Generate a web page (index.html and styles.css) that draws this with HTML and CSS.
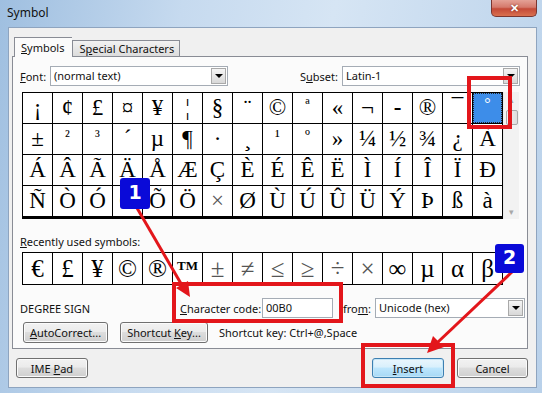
FILE: index.html
```html
<!DOCTYPE html>
<html lang="en">
<head>
    <meta charset="UTF-8">
    <title>Symbol</title>
    <link rel="stylesheet" href="styles.css">
</head>
<body>
    <div class="window">
        <div class="titlebar">
            <span class="title">Symbol</span>
            <div class="close">&#x2715;</div>
        </div>

        <div class="dialog">
            <div class="tabs">
                <div class="tab active"><u>S</u>ymbols</div>
                <div class="tab">S<u>p</u>ecial Characters</div>
            </div>

            <div class="panel">
                <div class="font-row">
                    <label class="lbl-font"><u>F</u>ont:</label>
                    <div class="select wide">(normal text)<span class="drop"></span></div>
                    <label class="lbl-subset">S<u>u</u>bset:</label>
                    <div class="select wide">Latin-1<span class="drop"></span></div>
                </div>

                <div class="grid-row">
                    <div class="grid">
                        <span>¡</span><span>¢</span><span>£</span><span>¤</span><span>¥</span><span>¦</span><span>§</span><span>¨</span><span>©</span><span class="sm">ª</span><span>«</span><span>¬</span><span class="bold">-</span><span>®</span><span>¯</span><span class="sel">°</span>
                        <span>±</span><span class="sm">²</span><span class="sm">³</span><span>´</span><span>µ</span><span>¶</span><span>·</span><span>¸</span><span class="sm">¹</span><span class="sm">º</span><span>»</span><span>¼</span><span>½</span><span>¾</span><span>¿</span><span>À</span>
                        <span>Á</span><span>Â</span><span>Ã</span><span>Ä</span><span>Å</span><span>Æ</span><span>Ç</span><span>È</span><span>É</span><span>Ê</span><span>Ë</span><span>Ì</span><span>Í</span><span>Î</span><span>Ï</span><span>Ð</span>
                        <span>Ñ</span><span>Ò</span><span>Ó</span><span>Ô</span><span>Õ</span><span>Ö</span><span class="light">×</span><span>Ø</span><span>Ù</span><span>Ú</span><span>Û</span><span>Ü</span><span>Ý</span><span>Þ</span><span>ß</span><span>à</span>
                    </div>
                    <div class="scrollbar">
                        <span class="arrow">&#x25B4;</span>
                        <span class="thumb"></span>
                        <span class="arrow bottom">&#x25BE;</span>
                    </div>
                </div>

                <div class="recent-label"><u>R</u>ecently used symbols:</div>
                <div class="recent">
                    <span>€</span><span>£</span><span>¥</span><span>©</span><span>®</span><span class="tm">TM</span><span class="light">±</span><span class="light">≠</span><span class="light">≤</span><span class="light">≥</span><span class="light">÷</span><span class="light">×</span><span>∞</span><span>µ</span><span>α</span><span>β</span>
                </div>

                <div class="info-row">
                    <span class="char-name">DEGREE SIGN</span>
                    <label class="lbl-code"><u>C</u>haracter code:</label>
                    <div class="input">00B0</div>
                    <label class="lbl-from">fro<u>m</u>:</label>
                    <div class="select narrow">Unicode (hex)<span class="drop"></span></div>
                </div>

                <div class="btn-row">
                    <button class="btn autocorrect"><u>A</u>utoCorrect...</button>
                    <button class="btn shortcut">Shortcut <u>K</u>ey...</button>
                    <span class="shortcut-text">Shortcut key: Ctrl+@,Space</span>
                </div>
            </div>

            <div class="footer">
                <button class="btn">IME <u>P</u>ad</button>
                <button class="btn primary"><u>I</u>nsert</button>
                <button class="btn cancel">Cancel</button>
            </div>
        </div>

        <div class="mark box-sel"></div>
        <div class="mark box-code"></div>
        <div class="mark box-insert"></div>
        <div class="badge badge-1">1</div>
        <div class="badge badge-2">2</div>

        <svg class="arrows" width="542" height="393" viewBox="0 0 542 393">
            <line x1="137" y1="208" x2="183" y2="287" stroke="#e3161b" stroke-width="3"/>
            <polygon points="188,281 176,288 190,297" fill="#e3161b"/>
            <line x1="512" y1="272" x2="438" y2="342" stroke="#e3161b" stroke-width="3"/>
            <polygon points="444,347 433,336 427,353" fill="#e3161b"/>
        </svg>
    </div>
</body>
</html>
```

FILE: styles.css
```css
body {
    margin: 0;
    font-family: "Noto Sans", "Open Sans", sans-serif;
    font-size: 11px;
    color: #111;
}
u {
    text-decoration: underline;
    text-underline-offset: 1px;
}
label, span, .tab, .select, .input, .btn {
    white-space: nowrap;
}
.window {
    position: relative;
    width: 542px;
    height: 393px;
    display: flex;
    flex-direction: column;
    background: linear-gradient(100deg, #9fbfe0 0%, #c6daef 30%, #d6e5f4 55%, #b9d1ea 100%);
    overflow: hidden;
}
.titlebar {
    height: 27px;
    display: flex;
    justify-content: space-between;
    align-items: flex-start;
    padding-left: 7px;
    flex-shrink: 0;
}
.title {
    line-height: 26px;
    font-size: 12px;
    color: #111;
}
.close {
    width: 46px;
    height: 17px;
    margin-right: 5px;
    border: 1px solid #7a3630;
    border-top: none;
    border-radius: 0 0 5px 5px;
    background: linear-gradient(#e4a196 0%, #d57a6c 45%, #c44a38 55%, #d9704f 100%);
    color: #fff;
    font-size: 11px;
    font-weight: bold;
    text-align: center;
    line-height: 16px;
    box-sizing: border-box;
    text-shadow: 0 0 2px #6a1a10;
}
.dialog {
    flex: 1;
    margin: 0 5px 5px 8px;
    background: #f0f0f0;
    border: 1px solid #8ea4bf;
    padding: 9px 8px 0 3px;
    display: flex;
    flex-direction: column;
}
.tabs {
    display: flex;
    align-items: flex-end;
    padding-left: 2px;
    height: 19px;
    position: relative;
    z-index: 1;
}
.tab {
    height: 16px;
    line-height: 15px;
    padding: 0 5px 0 6px;
    border: 1px solid #898c95;
    border-bottom: none;
    background: linear-gradient(#f2f2f2, #dcdcdc);
    box-sizing: border-box;
}
.tab.active {
    height: 20px;
    line-height: 20px;
    background: #fbfbfb;
    margin-bottom: -1px;
    border-right: none;
    padding: 0 8px 0 6px;
}
.panel {
    height: 293px;
    box-sizing: border-box;
    border: 1px solid #898c95;
    background: #fbfbfb;
    display: flex;
    flex-direction: column;
}
.font-row {
    display: flex;
    align-items: center;
    margin-top: 9px;
    padding: 0 7px;
    height: 20px;
}
.lbl-font {
    width: 30px;
}
.lbl-subset {
    margin-left: auto;
    margin-right: 4px;
}
.select {
    position: relative;
    height: 20px;
    box-sizing: border-box;
    border: 1px solid #a5acb5;
    background: #fff;
    padding-left: 3px;
    line-height: 18px;
}
.select.wide {
    width: 178px;
}
.select.narrow {
    width: 150px;
}
.drop {
    position: absolute;
    right: 1px;
    top: 1px;
    width: 15px;
    height: 16px;
    box-sizing: border-box;
    border: 1px solid #a9a9a9;
    background: linear-gradient(#f5f5f5, #d8d8d8);
}
.drop::after {
    content: "";
    position: absolute;
    left: 3px;
    top: 5px;
    border-left: 4px solid transparent;
    border-right: 4px solid transparent;
    border-top: 4px solid #000;
}
.grid-row {
    display: flex;
    margin-top: 6px;
    padding-left: 9px;
}
.grid, .recent {
    display: grid;
    grid-template-columns: repeat(16, 29px);
    gap: 1px;
    background: #000;
    border: 1px solid #000;
    font-family: "Liberation Serif", "DejaVu Serif", serif;
    color: #000;
}
.grid {
    grid-template-rows: repeat(4, 30px);
}
.grid span, .recent span {
    background: #fff;
    display: flex;
    align-items: center;
    justify-content: center;
    font-size: 23px;
}
.grid .sm {
    font-size: 16px;
    align-items: flex-start;
    padding-top: 3px;
}
.grid .bold {
    font-weight: bold;
}
.grid .light, .recent .light {
    color: #555;
}
.grid .sel {
    background: #3d8de9;
    color: #fff;
    font-size: 16px;
    align-items: flex-start;
    padding-top: 2px;
    outline: 1px dotted #222;
    outline-offset: -1px;
}
.scrollbar {
    width: 16px;
    height: 127px;
    background: #f2f2f2;
    display: flex;
    flex-direction: column;
    align-items: center;
    box-sizing: border-box;
    border-left: 1px solid #eaeaea;
}
.scrollbar .arrow {
    font-size: 9px;
    color: #a8a8a8;
    height: 15px;
    line-height: 15px;
}
.scrollbar .bottom {
    margin-top: auto;
}
.scrollbar .thumb {
    width: 12px;
    height: 15px;
    margin-top: 3px;
    border: 1px solid #a9a9a9;
    border-radius: 2px;
    background: linear-gradient(90deg, #f2f2f2, #dedede);
    box-sizing: border-box;
}
.recent-label {
    margin-top: 15px;
    padding-left: 7px;
    line-height: 16px;
}
.recent {
    margin: 2px 0 0 9px;
    width: max-content;
    grid-template-rows: 31px;
}
.recent span {
    font-size: 25px;
}
.recent .tm {
    font-size: 13px;
    font-weight: bold;
    align-items: flex-start;
    padding-top: 5px;
}
.info-row {
    display: flex;
    align-items: center;
    height: 20px;
    margin-top: 13px;
    padding-left: 7px;
}
.char-name {
    width: 160px;
}
.lbl-code {
    width: 78px;
}
.input {
    width: 71px;
    height: 20px;
    box-sizing: border-box;
    border: 1px solid #a5acb5;
    background: #fff;
    padding-left: 3px;
    line-height: 18px;
    margin-left: 4px;
}
.lbl-from {
    margin-left: 10px;
    margin-right: 4px;
}
.btn-row {
    display: flex;
    align-items: center;
    margin-top: 4px;
    padding-left: 10px;
}
.btn {
    height: 21px;
    box-sizing: border-box;
    border: 1px solid #707070;
    border-radius: 3px;
    background: linear-gradient(#f2f2f2 0%, #ebebeb 45%, #dddddd 50%, #cfcfcf 100%);
    font-family: inherit;
    font-size: 11px;
    color: #111;
    padding: 0;
    box-shadow: inset 0 0 0 1px #fbfbfb;
}
.autocorrect {
    width: 85px;
}
.shortcut {
    width: 88px;
    margin-left: 12px;
}
.shortcut-text {
    margin-left: 11px;
}
.footer {
    display: flex;
    margin-top: 9px;
    padding-left: 4px;
}
.footer .btn {
    width: 72px;
    height: 20px;
}
.footer .primary {
    margin-left: auto;
    border-color: #3c7fb1;
    background: linear-gradient(#eaf6fd 0%, #d9f0fc 45%, #bee6fd 50%, #a7d9f5 100%);
    box-shadow: inset 0 0 0 1px #c6e6f7;
}
.footer .cancel {
    width: 71px;
    margin-left: 13px;
}
.mark {
    position: absolute;
    border: 4px solid #e3161b;
    box-sizing: border-box;
}
.box-sel {
    left: 467px;
    top: 76px;
    width: 45px;
    height: 53px;
}
.box-code {
    left: 172px;
    top: 282px;
    width: 171px;
    height: 41px;
}
.box-insert {
    left: 361px;
    top: 343px;
    width: 94px;
    height: 45px;
}
.badge {
    position: absolute;
    width: 30px;
    height: 31px;
    border-radius: 3px;
    background: #0a0ad8;
    color: #fff;
    font-family: "DejaVu Sans", sans-serif;
    font-weight: bold;
    font-size: 19px;
    text-align: center;
    line-height: 29px;
    z-index: 2;
}
.badge-1 {
    left: 120px;
    top: 178px;
}
.badge-2 {
    left: 495px;
    top: 244px;
    width: 29px;
    height: 29px;
    line-height: 27px;
}
.arrows {
    position: absolute;
    left: 0;
    top: 0;
    pointer-events: none;
}
```
